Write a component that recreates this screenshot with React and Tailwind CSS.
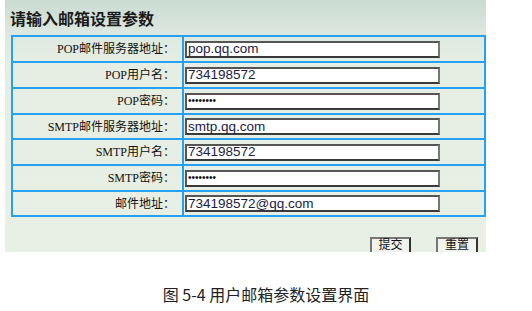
import React from 'react';

const rows = [
  { label: 'POP邮件服务器地址：', value: 'pop.qq.com', h: 'h-[26px]' },
  { label: 'POP用户名：', value: '734198572', h: 'h-[26px]' },
  { label: 'POP密码：', value: '••••••••', secret: true, h: 'h-[26px]' },
  { label: 'SMTP邮件服务器地址：', value: 'smtp.qq.com', h: 'h-[25px]' },
  { label: 'SMTP用户名：', value: '734198572', h: 'h-[26px]' },
  { label: 'SMTP密码：', value: '••••••••', secret: true, h: 'h-[26px]' },
  { label: '邮件地址：', value: '734198572@qq.com', h: 'h-[25px]' },
];

const cjk = { fontFamily: '"Liberation Serif", "Noto Sans CJK SC", serif' };
const sans = { fontFamily: '"Liberation Sans", sans-serif' };

export default function App() {
  return (
    <div className="w-[532px] h-[311px] bg-white overflow-hidden">
      <div className="pl-[5px]">
        <div className="w-[481px] h-[252px] overflow-hidden bg-[linear-gradient(180deg,#c9dbd1_0%,#dbe7df_12%,#e6eee3_25%,#e8efe4_100%)]">
          <div
            className="pl-[5px] pt-[8px] h-[35px] text-[16px] font-bold text-[#1b1b1b] leading-[20px]"
            style={{ fontFamily: '"Noto Sans CJK SC", sans-serif' }}
          >
            请输入邮箱设置参数
          </div>
          <div className="ml-[6px] border-x-2 border-b-2 border-[#25a0f2]">
            {rows.map((r) => (
              <div
                key={r.label}
                className={'grid grid-cols-[169px_1fr] border-t-2 border-[#25a0f2] ' + r.h}
              >
                <div
                  className="flex items-center justify-end pr-[7px] text-[12px] text-[#111]"
                  style={cjk}
                >
                  {r.label}
                </div>
                <div className="flex items-center border-l-2 border-[#25a0f2] pl-[1px]">
                  <div className="w-[255px] h-[17px] bg-white border-2 border-t-[#555] border-l-[#555] border-r-[#777] border-b-[#3a3a3a] flex items-center pl-[1px]">
                    {r.secret ? (
                      <span className="text-[10px] leading-none text-[#111]" style={sans}>
                        {r.value}
                      </span>
                    ) : (
                      <span className="text-[13.5px] leading-none text-[#1a1a48]" style={sans}>
                        {r.value}
                      </span>
                    )}
                  </div>
                </div>
              </div>
            ))}
          </div>
          <div className="flex justify-end gap-[25px] pr-[8px] pt-[20px]">
            <button
              className="w-[41px] h-[20px] flex justify-center items-start border-2 border-t-[#777] border-l-[#777] border-r-[#333] border-b-[#333] bg-[#f1f3ee] text-[12px] leading-[13px] text-[#111]"
              style={cjk}
            >
              提交
            </button>
            <button
              className="w-[42px] h-[20px] flex justify-center items-start border-2 border-t-[#777] border-l-[#777] border-r-[#333] border-b-[#333] bg-[#f1f3ee] text-[12px] leading-[13px] text-[#111]"
              style={cjk}
            >
              重置
            </button>
          </div>
        </div>
      </div>
      <div
        className="mt-[32px] text-center text-[16px] leading-[20px] text-[#222]"
        style={{ fontFamily: '"Noto Sans CJK SC", sans-serif' }}
      >
        图 5-4 用户邮箱参数设置界面
      </div>
    </div>
  );
}
